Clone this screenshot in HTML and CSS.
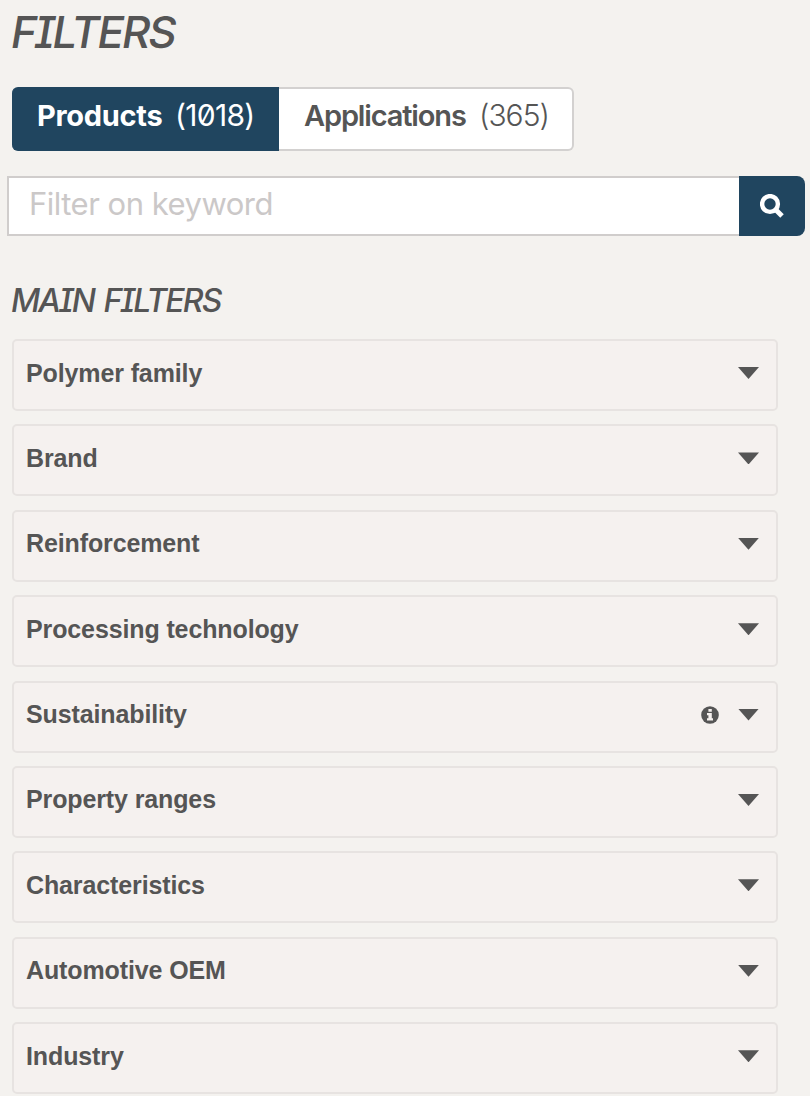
FILE: index.html
```html
<!DOCTYPE html>
<html lang="en">
<head>
    <meta charset="utf-8">
    <title>Filters</title>
    <link rel="stylesheet" href="styles.css">
</head>
<body>
    <h1>FILTERS</h1>

    <div class="tabs">
        <button type="button" class="tab active"><b class="products">Products</b><span class="count">(1018)</span></button>
        <button type="button" class="tab"><b class="applications">Applications</b><span class="count">(365)</span></button>
    </div>

    <form class="search">
        <input type="text" placeholder="Filter on keyword" aria-label="Filter on keyword">
        <button type="button" aria-label="Search">
            <svg width="24" height="24" viewBox="0 0 24 24" fill="none" stroke="#fff"><circle cx="10" cy="10" r="7.9" stroke-width="4.4"/><path d="M15.5 15.5l6.5 6.5" stroke-width="5"/></svg>
        </button>
    </form>

    <h2>MAIN FILTERS</h2>

    <div class="filters">
        <div class="filter"><span>Polymer family</span><i class="caret"></i></div>
        <div class="filter"><span>Brand</span><i class="caret"></i></div>
        <div class="filter"><span>Reinforcement</span><i class="caret"></i></div>
        <div class="filter"><span>Processing technology</span><i class="caret"></i></div>
        <div class="filter">
            <span>Sustainability</span>
            <svg class="info" width="18" height="18" viewBox="0 0 18 18"><circle cx="9" cy="9" r="8.8" fill="#555"/><path d="M7.4 3h3.4v2.7H7.4zM6 7h4.8v5.2H12v2.3H6v-2.3h1.4V9.3H6z" fill="#f5f1ef"/></svg>
            <i class="caret"></i>
        </div>
        <div class="filter"><span>Property ranges</span><i class="caret"></i></div>
        <div class="filter"><span>Characteristics</span><i class="caret"></i></div>
        <div class="filter"><span>Automotive OEM</span><i class="caret"></i></div>
        <div class="filter"><span>Industry</span><i class="caret"></i></div>
    </div>
</body>
</html>
```
FILE: styles.css
```css
* { box-sizing: border-box; }
body { margin: 0; padding: 0 5px 0 7px; height: 1096px; overflow: hidden; background: #f4f2ef; color: #555; font-family: Inter, sans-serif; }
h1, h2 { margin: 0 0 0 4px; font-style: italic; font-weight: 550; font-feature-settings: "cv08"; white-space: nowrap; }
h1 { height: 87px; padding-top: 4px; font-size: 44px; line-height: 56px; letter-spacing: -2.2px; }
h2 { height: 55px; font-size: 32px; line-height: 40px; letter-spacing: -1.9px; word-spacing: 3px; margin-top: 45px; margin-bottom: 3px; }
button, input { font-family: inherit; color: inherit; }

.tabs { display: flex; width: 562px; height: 64px; margin-left: 5px; }
.tab { display: flex; justify-content: flex-start; align-items: baseline; padding: 9px 0 0 25px; border: 2px solid #d3d1d0; border-left: 0; border-radius: 0 6px 6px 0; background: #fff; flex: 1; font-size: 30px; line-height: 34px; text-align: left; white-space: nowrap; }
.tab.active { flex: 0 0 267px; border-color: #20455f; background: #20455f; color: #fff; border-radius: 6px 0 0 6px; }
.tab b { font-size: 29px; font-weight: 700; letter-spacing: -.3px; }
.tab .products { width: 138px; }
.tab .applications { width: 175px; font-weight: 600; letter-spacing: -1.15px; }
.count { font-weight: 300; letter-spacing: -1px; font-feature-settings: "zero"; }
.active .count { font-weight: 400; letter-spacing: -.7px; }

.search { display: flex; height: 60px; margin-top: 25px; }
.search input { flex: 1; min-width: 0; padding: 0 20px 5px; border: 2px solid #d0cdcc; border-right: 0; background: #fff; font-size: 31px; outline: none; }
.search input::placeholder { color: #cbc8c8; opacity: 1; font-weight: 400; letter-spacing: -.5px; }
.search button { display: flex; align-items: center; justify-content: center; width: 66px; padding: 0; border: 0; border-radius: 0 8px 8px 0; background: #20455f; }

.filters { display: grid; grid-auto-rows: 72px; row-gap: 13.4px; width: 766px; margin-left: 5px; }
.filter { display: flex; align-items: center; padding: 0 17px 4px 12px; border: 2px solid #e7e3e1; border-radius: 5px; background: #f5f1ef; font-family: "Liberation Sans", Arial, sans-serif; font-size: 25px; font-weight: bold; }
.filter span { flex: 1; letter-spacing: -.12px; }
.info { margin-right: 19px; }
.caret { width: 21px; height: 12px; background: #555; clip-path: polygon(0 0, 100% 0, 50% 100%); }
```
